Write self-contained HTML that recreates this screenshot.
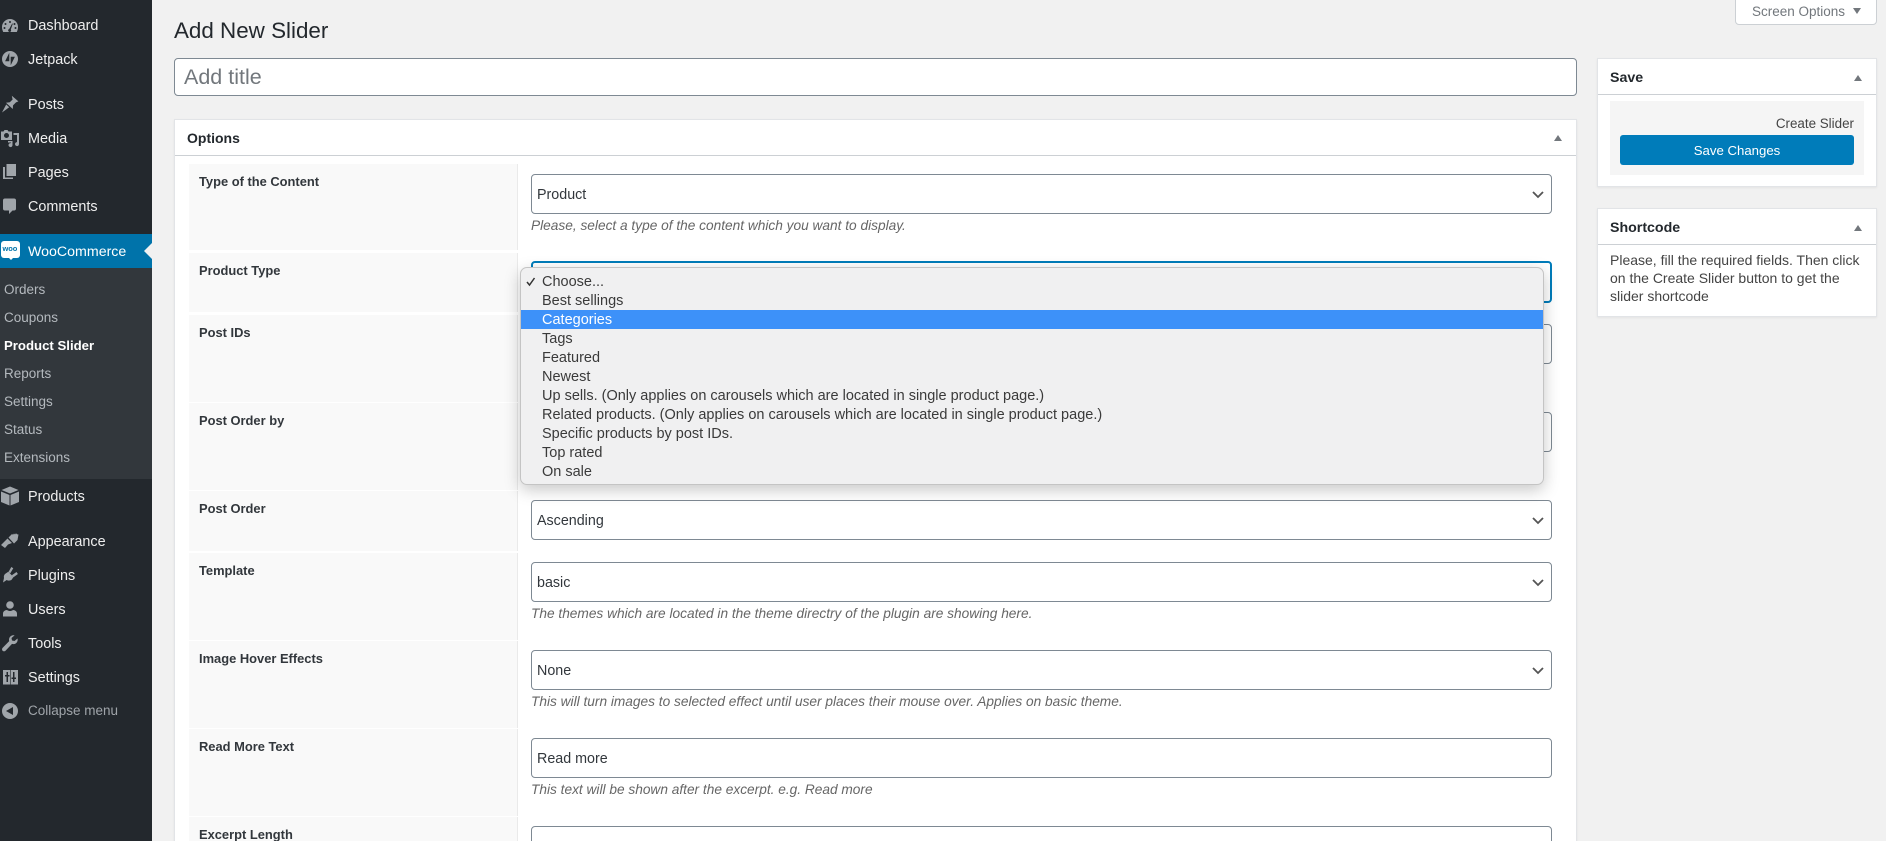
<!DOCTYPE html>
<html><head><meta charset="utf-8"><title>Add New Slider</title>
<style>
html,body{margin:0;padding:0;width:1886px;height:841px;overflow:hidden;background:#f1f1f1;font-family:"Liberation Sans",sans-serif;color:#444}
div,span,svg{position:absolute;box-sizing:border-box}
#root{left:0;top:0;width:1886px;height:841px;overflow:hidden;background:#f1f1f1}
.t{white-space:nowrap;height:20px;line-height:22px}
.m{left:28px;font-size:14.4px;color:#eee}
.s{left:4px;font-size:13.5px;color:#b4b9be}
.i{left:0;width:20px;height:20px;fill:#a0a5aa}
.l{left:199px;font-size:12.9px;font-weight:bold;color:#32373c}
.r{left:189px;width:329px;background:#f9f9f9;border-right:1px solid #eaeaea}
.f{left:531px;width:1021px;height:40px;background:#fff;border:1px solid #7e8993;border-radius:4px}
.v{left:537px;font-size:14.3px;color:#32373c}
.d{left:531px;font-size:13.7px;font-style:italic;color:#666}
.c{left:1531px;width:14px;height:9px;fill:none;stroke:#555;stroke-width:1.8}
.o{left:542px;font-size:14.5px;color:#3a3a3a;height:19px;line-height:21px}
.b{background:#fff;border:1px solid #e2e4e7;box-shadow:0 1px 2px rgba(0,0,0,.06)}
.h{font-size:14.2px;font-weight:bold;color:#23282d}
.u{width:0;height:0;border-left:4px solid transparent;border-right:4px solid transparent;border-bottom:6px solid #72777c}
</style></head><body>
<div id="root">

<div style="left:0;top:0;width:152px;height:841px;background:#23282d"></div>
<div style="left:0;top:268px;width:152px;height:211px;background:#32373c"></div>
<div style="left:0;top:234px;width:152px;height:34px;background:#0073aa"></div>
<div style="left:144px;top:243px;width:0;height:0;border-top:8px solid transparent;border-bottom:8px solid transparent;border-right:8px solid #f1f1f1"></div>

<svg class="i" style="top:15px" viewBox="0 0 20 20"><path d="M2 12a8 8 0 0 1 16 0c0 1.800-.5 3.400-1.200 5H3.200C2.500 15.400 2 13.800 2 12z"/><g fill="#23282d"><circle cx="10" cy="7" r="1"/><circle cx="5.500" cy="9" r="1"/><circle cx="14.500" cy="9" r="1"/><circle cx="4.500" cy="13" r="1"/><circle cx="15.500" cy="13" r="1"/><path d="M9.200 14l3-5.500.6.300-2 5.700a1.500 1.500 0 1 1-1.600-.5z"/></g></svg>
<svg class="i" style="top:49px" viewBox="0 0 20 20"><circle cx="10" cy="10" r="8"/><path fill="#23282d" d="M9.300 3.800v8.400H5.100zM10.700 16.200V7.800h4.200z"/></svg>
<svg class="i" style="top:94px" viewBox="0 0 20 20"><path d="M11.800 1.800l6.600 5.600-2.400 1-3 3-.2 3.600-6.800-6.200 3.800-.5 2.800-2.800z"/><path d="M6.200 10.500l3 2.700L2 18.500z"/></svg>
<svg class="i" style="top:128px" viewBox="0 0 20 20"><path fill-rule="evenodd" d="M1 3.500h2.500l1-1.500h3l1 1.500H12v8.500H1zM6.500 5a2.500 2.500 0 1 0 0 5 2.500 2.500 0 0 0 0-5z"/><path d="M13.500 5H19v11a2 2 0 1 1-2-1.900V7h-3.500zM8 13h4.500v4a2 2 0 1 1-2-1.900h.5V14.500H8z"/></svg>
<svg class="i" style="top:162px" viewBox="0 0 20 20"><path d="M6.500 2H16v12H6.500z"/><path d="M3 5h2v10.500h8V17H3z"/></svg>
<svg class="i" style="top:196px" viewBox="0 0 20 20"><path d="M5 2.500h9a2 2 0 0 1 2 2v8a2 2 0 0 1-2 2h-1.500L9 18v-3.500H5a2 2 0 0 1-2-2v-8a2 2 0 0 1 2-2z"/></svg>
<div style="left:1px;top:241px;width:19px;height:17px;background:#fff;border-radius:3px"></div>
<div style="left:8px;top:257px;width:0;height:0;border-left:3px solid transparent;border-right:3px solid transparent;border-top:3px solid #fff"></div>
<div class="t" style="left:2.500px;top:238px;font-size:7.500px;font-weight:bold;color:#0073aa;letter-spacing:-.1px">woo</div>
<svg class="i" style="top:486px" viewBox="0 0 20 20"><path d="M10 .5l8.500 3.500-8.500 3.500L1.500 4z"/><path d="M1 5.500l8.500 3.500v10.500L1 16zM19 5.500L10.500 9v10.500L19 16z"/></svg>
<svg class="i" style="top:531px" viewBox="0 0 20 20"><path d="M8.500 6.500L12 3l1 .8 1-1.300 1 1 1-1.300 1 1 1.500.3-1 5.500-3.500 3.500z"/><path d="M7.500 7.500l4.500 4.500-4 1.500-3 3.500-4-3 3.500-3.500z"/></svg>
<svg class="i" style="top:565px" viewBox="0 0 20 20"><path d="M8.300 6.800L13.500 12l-1.800 2.600c-1.500 1.200-3.500 1.300-5 .4L3 17.500l1-4.500c-.4-1.500 0-2.900 1-4z"/><path d="M8.500 7l2.800-5 2 1.300-3 5zM11.800 10.300l4.700-3.300 1.400 2-4.400 3.200z"/></svg>
<svg class="i" style="top:599px" viewBox="0 0 20 20"><circle cx="10" cy="6" r="3.800"/><path d="M3 17.500v-3c0-2 2-3.500 4-3.500 1 .8 2 1 3 1s2-.2 3-1c2 0 4 1.500 4 3.500v3z"/></svg>
<svg class="i" style="top:633px" viewBox="0 0 20 20"><path d="M17.500 5.500c.5 2-.2 4-1.800 5-1.200.7-2.500.8-3.700.4l-6.500 6.800c-.8.8-2.100.8-2.900 0s-.7-2 0-2.800l6.600-6.800c-.4-1.300-.2-2.800.6-4 1-1.500 3-2.200 4.800-1.700L11.500 5l.5 2.500 2.500.5z"/></svg>
<svg class="i" style="top:667px" viewBox="0 0 20 20"><path fill-rule="evenodd" d="M3 3h15v14.500H3zM6.500 5v3H5v1.500h1.500V15H8V9.500h1.500V8H8V5zM13 5v5.500h-1.500V12H13v3h1.500v-3H16v-1.500h-1.500V5z"/><path d="M10.300 3h.6v14.500h-.6z" fill="#23282d"/></svg>
<svg class="i" style="top:701px" viewBox="0 0 20 20"><path fill-rule="evenodd" d="M10 2a8 8 0 1 1 0 16 8 8 0 0 1 0-16zm3 4l-7 4 7 4z"/></svg>

<div class="t m" style="top:15px">Dashboard</div>
<div class="t m" style="top:49px">Jetpack</div>
<div class="t m" style="top:94px">Posts</div>
<div class="t m" style="top:128px">Media</div>
<div class="t m" style="top:162px">Pages</div>
<div class="t m" style="top:196px">Comments</div>
<div class="t m" style="top:241px;color:#fff;font-size:14.2px">WooCommerce</div>
<div class="t s" style="top:279px">Orders</div>
<div class="t s" style="top:307px">Coupons</div>
<div class="t s" style="top:335px;color:#fff;font-weight:bold;font-size:13.2px">Product Slider</div>
<div class="t s" style="top:363px">Reports</div>
<div class="t s" style="top:391px">Settings</div>
<div class="t s" style="top:419px">Status</div>
<div class="t s" style="top:447px">Extensions</div>
<div class="t m" style="top:486px">Products</div>
<div class="t m" style="top:531px">Appearance</div>
<div class="t m" style="top:565px">Plugins</div>
<div class="t m" style="top:599px">Users</div>
<div class="t m" style="top:633px">Tools</div>
<div class="t m" style="top:667px">Settings</div>
<div class="t m" style="top:700px;color:#a0a5aa;font-size:13.5px">Collapse menu</div>

<div class="t" style="left:174px;top:20px;font-size:22.400px;color:#23282d">Add New Slider</div>
<div style="left:174px;top:58px;width:1403px;height:38px;background:#fff;border:1px solid #7e8993;border-radius:4px"></div>
<div class="t" style="left:184px;top:66px;font-size:21.500px;color:#72777c">Add title</div>

<div style="left:1735px;top:-2px;width:142px;height:27px;background:#fff;border:1px solid #ccd0d4;border-radius:0 0 4px 4px"></div>
<div class="t" style="left:1752px;top:1px;font-size:13.5px;color:#72777c">Screen Options</div>
<div style="left:1853px;top:8px;width:0;height:0;border-left:4px solid transparent;border-right:4px solid transparent;border-top:6px solid #72777c"></div>

<div class="b" style="left:174px;top:119px;width:1403px;height:740px"></div>
<div style="left:175px;top:155px;width:1401px;height:1px;background:#ccd0d4"></div>
<div class="t h" style="left:187px;top:127px;font-size:14px">Options</div>
<div class="u" style="left:1554px;top:135px"></div>

<div class="r" style="top:164px;height:86px"></div>
<div class="r" style="top:253px;height:59px"></div>
<div class="r" style="top:315px;height:87px"></div>
<div class="r" style="top:403px;height:87px"></div>
<div class="r" style="top:491px;height:60px"></div>
<div class="r" style="top:553px;height:87px"></div>
<div class="r" style="top:641px;height:87px"></div>
<div class="r" style="top:729px;height:87px"></div>
<div class="r" style="top:817px;height:24px"></div>

<div class="t l" style="top:171px">Type of the Content</div>
<div class="t l" style="top:260px">Product Type</div>
<div class="t l" style="top:322px">Post IDs</div>
<div class="t l" style="top:410px">Post Order by</div>
<div class="t l" style="top:498px">Post Order</div>
<div class="t l" style="top:560px">Template</div>
<div class="t l" style="top:648px">Image Hover Effects</div>
<div class="t l" style="top:736px">Read More Text</div>
<div class="t l" style="top:824px">Excerpt Length</div>

<div class="f" style="top:174px"></div>
<div class="f" style="top:261px;height:42px;border:2px solid #007cba"></div>
<div class="f" style="top:324px"></div>
<div class="f" style="top:412px"></div>
<div class="f" style="top:500px"></div>
<div class="f" style="top:562px"></div>
<div class="f" style="top:650px"></div>
<div class="f" style="top:738px"></div>
<div class="f" style="top:826px"></div>

<div class="t v" style="top:184px">Product</div>
<div class="t v" style="top:510px">Ascending</div>
<div class="t v" style="top:572px">basic</div>
<div class="t v" style="top:660px">None</div>
<div class="t v" style="top:748px">Read more</div>

<svg class="c" style="top:190px" viewBox="0 0 14 9"><path d="M2 2l5 5 5-5"/></svg>
<svg class="c" style="top:516px" viewBox="0 0 14 9"><path d="M2 2l5 5 5-5"/></svg>
<svg class="c" style="top:578px" viewBox="0 0 14 9"><path d="M2 2l5 5 5-5"/></svg>
<svg class="c" style="top:666px" viewBox="0 0 14 9"><path d="M2 2l5 5 5-5"/></svg>

<div class="t d" style="top:215px">Please, select a type of the content which you want to display.</div>
<div class="t d" style="top:603px">The themes which are located in the theme directry of the plugin are showing here.</div>
<div class="t d" style="top:691px">This will turn images to selected effect until user places their mouse over. Applies on basic theme.</div>
<div class="t d" style="top:779px">This text will be shown after the excerpt. e.g. Read more</div>

<div style="left:520px;top:267px;width:1024px;height:218px;background:#f0f0f1;border:1px solid #c4c4c4;border-radius:7px;box-shadow:0 5px 16px rgba(0,0,0,.22)"></div>
<div style="left:521px;top:310px;width:1022px;height:19px;background:#3d91f9"></div>
<svg style="left:525px;top:276px;width:12px;height:11px" viewBox="0 0 12 11"><path d="M2 6l2.500 3L9.500 2" fill="none" stroke="#333" stroke-width="1.500"/></svg>
<div class="t o" style="top:272px">Choose...</div>
<div class="t o" style="top:291px">Best sellings</div>
<div class="t o" style="top:310px;color:#fff">Categories</div>
<div class="t o" style="top:329px">Tags</div>
<div class="t o" style="top:348px">Featured</div>
<div class="t o" style="top:367px">Newest</div>
<div class="t o" style="top:386px">Up sells. (Only applies on carousels which are located in single product page.)</div>
<div class="t o" style="top:405px">Related products. (Only applies on carousels which are located in single product page.)</div>
<div class="t o" style="top:424px">Specific products by post IDs.</div>
<div class="t o" style="top:443px">Top rated</div>
<div class="t o" style="top:462px">On sale</div>

<div class="b" style="left:1597px;top:58px;width:280px;height:129px"></div>
<div style="left:1598px;top:94px;width:278px;height:1px;background:#ccd0d4"></div>
<div class="t h" style="left:1610px;top:67px">Save</div>
<div class="u" style="left:1854px;top:75px"></div>
<div style="left:1610px;top:101px;width:254px;height:74px;background:#f5f5f5"></div>
<div class="t" style="right:32px;top:113px;font-size:13.4px;color:#444">Create Slider</div>
<div style="left:1620px;top:135px;width:234px;height:30px;background:#007cba;border-radius:3px"></div>
<div class="t" style="left:1620px;width:234px;text-align:center;top:140px;font-size:13.2px;color:#fff">Save Changes</div>

<div class="b" style="left:1597px;top:208px;width:280px;height:109px"></div>
<div style="left:1598px;top:244px;width:278px;height:1px;background:#ccd0d4"></div>
<div class="t h" style="left:1610px;top:217px">Shortcode</div>
<div class="u" style="left:1854px;top:225px"></div>
<div class="t" style="left:1610px;top:250px;font-size:14px;line-height:20px">Please, fill the required fields. Then click</div>
<div class="t" style="left:1610px;top:268px;font-size:14px;line-height:20px">on the Create Slider button to get the</div>
<div class="t" style="left:1610px;top:286px;font-size:14px;line-height:20px">slider shortcode</div>

</div>
</body></html>
